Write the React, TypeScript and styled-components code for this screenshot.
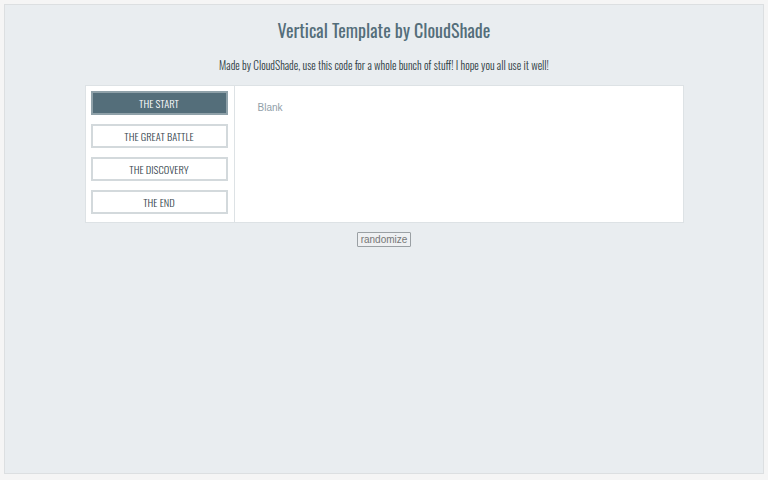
import React, { useState } from "react";
import styled, { createGlobalStyle } from "styled-components";

const Global = createGlobalStyle`
  html, body { margin: 0; padding: 0; background: #f5f5f5; }
  body { padding: 4px 4px 6px 4px; height: 480px; box-sizing: border-box; }
  #root { height: 100%; }
`;

const CONDENSED = `Oswald, "Open Sans", sans-serif`;

const Frame = styled.div`
  box-sizing: border-box;
  height: 100%;
  background: #e9edf0;
  border: 1px solid #dcdfe1;
  display: flex;
  flex-direction: column;
  align-items: center;
`;

const Title = styled.h1`
  margin: 13px 0 0;
  font-family: ${CONDENSED};
  font-stretch: condensed;
  font-weight: 400;
  font-size: 18px;
  line-height: 24px;
  color: #546e7a;
`;

const Subtitle = styled.p`
  margin: 16px 0 0;
  font-family: ${CONDENSED};
  font-stretch: condensed;
  font-weight: 300;
  font-size: 11.25px;
  line-height: 14px;
  color: #2f3d44;
`;

const Card = styled.div`
  margin-top: 13px;
  width: 599px;
  height: 138px;
  box-sizing: border-box;
  background: #fff;
  border: 1px solid #dde2e5;
  display: flex;
`;

const Sidebar = styled.nav`
  width: 149px;
  box-sizing: border-box;
  border-right: 1px solid #dde2e5;
  padding: 5px 6px 0 5px;
  display: flex;
  flex-direction: column;
  gap: 9px;
`;

const Tab = styled.button<{ $active?: boolean }>`
  box-sizing: border-box;
  width: 137px;
  height: 24px;
  padding: 0;
  border: 2px solid ${(p) => (p.$active ? "#8fa1a9" : "#d3d9dc")};
  background: ${(p) => (p.$active ? "#546e7a" : "#fff")};
  color: ${(p) => (p.$active ? "#fff" : "#37474f")};
  font-family: ${CONDENSED};
  font-stretch: condensed;
  font-weight: 300;
  font-size: 10.5px;
  text-transform: uppercase;
  cursor: pointer;
`;

const Content = styled.div`
  flex: 1;
  padding: 16px 23px;
  font-family: "Liberation Sans", Arial, sans-serif;
  font-size: 10px;
  color: #90a0a8;
`;

const Randomize = styled.button`
  margin-top: 9px;
  padding: 0 3px;
  height: 15px;
  font-family: "Liberation Sans", Arial, sans-serif;
  font-size: 10px;
  color: #777;
  background: #eef0f2;
  border: 1px solid #9aa0a4;
  border-radius: 1px;
`;

const tabs = ["The Start", "The Great Battle", "The Discovery", "The End"];

export default function App() {
  const [active, setActive] = useState(0);
  return (
    <>
      <Global />
      <Frame>
        <Title>Vertical Template by CloudShade</Title>
        <Subtitle>
          Made by CloudShade, use this code for a whole bunch of stuff! I hope you all use it well!
        </Subtitle>
        <Card>
          <Sidebar>
            {tabs.map((t, i) => (
              <Tab key={t} $active={i === active} onClick={() => setActive(i)}>
                {t}
              </Tab>
            ))}
          </Sidebar>
          <Content>Blank</Content>
        </Card>
        <Randomize onClick={() => setActive(Math.floor(Math.random() * tabs.length))}>
          randomize
        </Randomize>
      </Frame>
    </>
  );
}
